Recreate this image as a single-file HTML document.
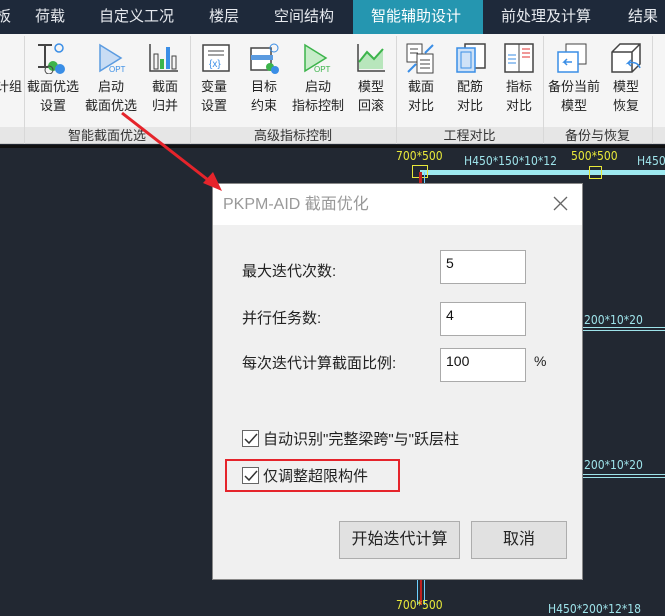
<!DOCTYPE html>
<html><head><meta charset="utf-8"><style>
*{margin:0;padding:0;box-sizing:border-box}
body{width:665px;height:613px;overflow:hidden;background:#222832;font-family:"Liberation Sans","Noto Sans CJK SC",sans-serif;position:relative}
.a{position:absolute}
.top{left:0;top:0;width:665px;height:34px;background:#1e293a}
.tab{top:0;height:34px;line-height:34px;color:#e6e9ee;font-size:15px;position:absolute}
.rib{left:0;top:34px;width:665px;height:93px;background:#f5f5f5}
.grp{left:0;top:127px;width:665px;height:17px;background:#e6e6e6;border-bottom:1px solid #ccc}
.gl{font-size:13px;color:#333;top:127px;height:17px;line-height:17px;position:absolute;text-align:center}
.sep{width:1px;background:#d8d8d8;top:36px;height:108px;position:absolute}
.lb{position:absolute;font-size:13px;color:#222;text-align:center;line-height:19px;top:77px}
.ic{position:absolute;top:42px;width:32px;height:32px}
.cy{color:#9ee3ea;font-size:12px;font-family:"DejaVu Sans Condensed","Liberation Sans",sans-serif}
.ye{color:#e8e83a;font-size:12px;font-family:"DejaVu Sans Condensed","Liberation Sans",sans-serif}
.dlg{left:212px;top:183px;width:371px;height:397px;background:#f0f0f0;border:1px solid #888}
.tt{left:0;top:0;width:369px;height:41px;background:#fff;color:#999;font-size:16px;line-height:41px;padding-left:10px}
.t{font-size:15px;color:#222;position:absolute}
.in{position:absolute;width:86px;height:34px;background:#fff;border:1px solid #aaa;font-size:14px;padding:4px 0 0 5px;color:#111}
.cb{position:absolute;width:17px;height:17px;border:1px solid #666;background:#fff}
.btn{position:absolute;height:38px;background:#e1e1e1;border:1px solid #adadad;font-size:16px;text-align:center;line-height:36px;color:#222}
</style></head><body>
<div class="a top"></div>
<div class="tab" style="left:-4px">板</div>
<div class="tab" style="left:35px">荷载</div>
<div class="tab" style="left:99px">自定义工况</div>
<div class="tab" style="left:209px">楼层</div>
<div class="tab" style="left:274px">空间结构</div>
<div class="a" style="left:353px;top:0;width:130px;height:34px;background:#2596b0"></div>
<div class="tab" style="left:371px;color:#fff">智能辅助设计</div>
<div class="tab" style="left:501px">前处理及计算</div>
<div class="tab" style="left:628px">结果</div>
<div class="a rib"></div><div class="a grp"></div>
<div class="sep" style="left:24px"></div><div class="sep" style="left:190px"></div><div class="sep" style="left:396px"></div><div class="sep" style="left:543px"></div><div class="sep" style="left:652px"></div>
<div class="gl" style="left:24px;width:166px">智能截面优选</div>
<div class="gl" style="left:190px;width:206px">高级指标控制</div>
<div class="gl" style="left:396px;width:147px">工程对比</div>
<div class="gl" style="left:543px;width:109px">备份与恢复</div>
<!-- icons -->
<svg class="ic" style="left:36px" viewBox="0 0 32 32"><path d="M2 3h14M9 3v22M2 25h14" stroke="#444" stroke-width="2" fill="none"/><circle cx="23" cy="6" r="4" fill="none" stroke="#3a8ee6" stroke-width="1.5"/><circle cx="17" cy="24" r="5" fill="#3cb44b"/><circle cx="24" cy="27" r="5" fill="#3a8ee6"/><circle cx="13" cy="28" r="4" fill="none" stroke="#444"/></svg>
<svg class="ic" style="left:97px" viewBox="0 0 32 32"><path d="M3 3L24 16L3 29Z" fill="#c8dcf4" stroke="#5b9be0" stroke-width="1.5"/><text x="12" y="30" font-size="8" fill="#3a8ee6" font-family="Liberation Sans">OPT</text></svg>
<svg class="ic" style="left:148px" viewBox="0 0 32 32"><path d="M2 2v27h28" stroke="#444" fill="none" stroke-width="1.5"/><rect x="6" y="12" width="4" height="15" fill="none" stroke="#444"/><rect x="12" y="17" width="4" height="10" fill="#3cb44b"/><rect x="18" y="5" width="4" height="22" fill="#3a8ee6"/><rect x="24" y="14" width="4" height="13" fill="none" stroke="#444"/></svg>
<svg class="ic" style="left:200px" viewBox="0 0 32 32"><rect x="3" y="3" width="26" height="26" fill="#fff" stroke="#444" stroke-width="1.5"/><path d="M8 9h16M8 13h16" stroke="#444"/><text x="9" y="25" font-size="10" fill="#3a8ee6">{x}</text></svg>
<svg class="ic" style="left:248px" viewBox="0 0 32 32"><rect x="3" y="6" width="20" height="22" fill="#fff" stroke="#444" stroke-width="1.5"/><rect x="3" y="13" width="22" height="5" fill="#5b9be0"/><circle cx="26" cy="6" r="4" fill="none" stroke="#3a8ee6"/><circle cx="22" cy="25" r="4" fill="#3cb44b"/><circle cx="27" cy="28" r="4" fill="#3a8ee6"/></svg>
<svg class="ic" style="left:302px" viewBox="0 0 32 32"><path d="M3 3L24 16L3 29Z" fill="#c6ecc8" stroke="#3cb44b" stroke-width="1.5"/><text x="12" y="30" font-size="8" fill="#3cb44b" font-family="Liberation Sans">OPT</text></svg>
<svg class="ic" style="left:355px" viewBox="0 0 32 32"><path d="M3 2v27h27" stroke="#444" fill="none" stroke-width="1.5"/><path d="M4 20L12 10L19 17L28 7V27H4Z" fill="#b8e6bc"/><path d="M4 20L12 10L19 17L28 7" stroke="#3cb44b" stroke-width="2" fill="none"/></svg>
<svg class="ic" style="left:405px" viewBox="0 0 32 32"><rect x="2" y="2" width="15" height="18" fill="#fff" stroke="#444"/><rect x="12" y="12" width="16" height="19" fill="#fff" stroke="#444"/><path d="M5 7h8M5 11h8M15 18h10M15 22h10M15 26h10" stroke="#444"/><path d="M28 3L20 11M3 30L11 22" stroke="#3a8ee6" stroke-width="2"/></svg>
<svg class="ic" style="left:455px" viewBox="0 0 32 32"><rect x="10" y="2" width="20" height="24" fill="#fff" stroke="#444" stroke-width="1.5"/><rect x="2" y="6" width="18" height="24" fill="#cfe2f7" stroke="#3a8ee6" stroke-width="1.5"/><rect x="6" y="10" width="10" height="16" fill="none" stroke="#3a8ee6"/></svg>
<svg class="ic" style="left:503px" viewBox="0 0 32 32"><rect x="2" y="2" width="28" height="28" fill="#fff" stroke="#444" stroke-width="1.5"/><path d="M16 2v28" stroke="#444"/><path d="M5 13h8M5 17h8M5 21h8" stroke="#3a8ee6"/><path d="M19 7h8M19 11h8M19 15h8" stroke="#e03030"/></svg>
<svg class="ic" style="left:556px" viewBox="0 0 32 32"><path d="M10 2h20v20H10z" fill="#fff" stroke="#444"/><rect x="2" y="10" width="20" height="20" fill="#fff" stroke="#3a8ee6" stroke-width="1.5"/><path d="M16 20H8l3-3M8 20l3 3" stroke="#3a8ee6" stroke-width="1.5" fill="none"/></svg>
<svg class="ic" style="left:610px" viewBox="0 0 32 32"><path d="M2 10L10 2h20v20l-8 8H2z M2 10h20v20 M22 10l8-8" fill="#fff" stroke="#444" stroke-width="1.5"/><path d="M30 26c-2-6-8-6-12-5l3-3M18 21l3 3" stroke="#3a8ee6" stroke-width="1.5" fill="none"/></svg>
<div class="lb" style="left:-4px;width:26px;text-align:right">计组</div>
<div class="lb" style="left:24px;width:58px">截面优选<br>设置</div>
<div class="lb" style="left:82px;width:58px">启动<br>截面优选</div>
<div class="lb" style="left:140px;width:50px">截面<br>归并</div>
<div class="lb" style="left:194px;width:40px">变量<br>设置</div>
<div class="lb" style="left:244px;width:40px">目标<br>约束</div>
<div class="lb" style="left:288px;width:60px">启动<br>指标控制</div>
<div class="lb" style="left:351px;width:40px">模型<br>回滚</div>
<div class="lb" style="left:401px;width:40px">截面<br>对比</div>
<div class="lb" style="left:450px;width:40px">配筋<br>对比</div>
<div class="lb" style="left:499px;width:40px">指标<br>对比</div>
<div class="lb" style="left:545px;width:58px">备份当前<br>模型</div>
<div class="lb" style="left:606px;width:40px">模型<br>恢复</div>
<div class="a" style="left:0;top:145px;width:665px;height:3px;background:#111"></div>
<!-- canvas -->
<div class="a ye" style="left:396px;top:149px">700*500</div>
<div class="a cy" style="left:464px;top:154px">H450*150*10*12</div>
<div class="a ye" style="left:571px;top:149px">500*500</div>
<div class="a cy" style="left:637px;top:154px">H450</div>
<div class="a" style="left:420px;top:170px;width:245px;height:5px;background:#9ee9f0"></div>
<div class="a" style="left:412px;top:165px;width:16px;height:13px;border:1.5px solid #e8e83a"></div>
<div class="a" style="left:589px;top:166px;width:13px;height:13px;border:1.5px solid #e8e83a"></div>
<div class="a" style="left:419px;top:172px;width:3px;height:12px;background:#c02020"></div>
<div class="a" style="left:424px;top:172px;width:1px;height:12px;background:#6cd0ff"></div>
<div class="a cy" style="left:584px;top:313px">200*10*20</div>
<div class="a" style="left:583px;top:327px;width:82px;height:1px;background:#9ee3ea"></div><div class="a" style="left:583px;top:330px;width:82px;height:1px;background:#9ee3ea"></div>
<div class="a cy" style="left:584px;top:458px">200*10*20</div>
<div class="a" style="left:583px;top:474px;width:82px;height:1px;background:#9ee3ea"></div><div class="a" style="left:583px;top:477px;width:82px;height:1px;background:#9ee3ea"></div>
<div class="a" style="left:417px;top:580px;width:1px;height:25px;background:#6cd0ff"></div><div class="a" style="left:420px;top:580px;width:2px;height:25px;background:#c02020"></div><div class="a" style="left:424px;top:580px;width:1px;height:25px;background:#6cd0ff"></div>
<div class="a ye" style="left:396px;top:598px">700*500</div>
<div class="a cy" style="left:548px;top:602px">H450*200*12*18</div>
<!-- dialog -->
<div class="a dlg">
<div class="a tt">PKPM-AID 截面优化</div>
<svg class="a" style="left:340px;top:12px" width="15" height="15"><path d="M1 1L14 14M14 1L1 14" stroke="#666" stroke-width="1.3"/></svg>
<div class="t" style="left:29px;top:76px">最大迭代次数:</div>
<div class="t" style="left:29px;top:123px">并行任务数:</div>
<div class="t" style="left:29px;top:168px">每次迭代计算截面比例:</div>
<div class="in" style="left:227px;top:66px">5</div>
<div class="in" style="left:227px;top:118px">4</div>
<div class="in" style="left:227px;top:164px">100</div>
<div class="t" style="left:321px;top:169px;font-size:14px">%</div>
<div class="cb" style="left:29px;top:246px"></div>
<svg class="a" style="left:31px;top:249px" width="14" height="12"><path d="M1 6L5 10L13 1" stroke="#333" stroke-width="1.5" fill="none"/></svg>
<div class="t" style="left:50px;top:244px">自动识别"完整梁跨"与"跃层柱</div>
<div class="a" style="left:12px;top:275px;width:175px;height:33px;border:2px solid #e5242b"></div>
<div class="cb" style="left:29px;top:283px"></div>
<svg class="a" style="left:31px;top:286px" width="14" height="12"><path d="M1 6L5 10L13 1" stroke="#333" stroke-width="1.5" fill="none"/></svg>
<div class="t" style="left:50px;top:281px">仅调整超限构件</div>
<div class="btn" style="left:126px;top:337px;width:121px">开始迭代计算</div>
<div class="btn" style="left:258px;top:337px;width:96px">取消</div>
</div>
<svg class="a" style="left:0;top:0" width="665" height="613"><path d="M122 113L212 183" stroke="#e5242b" stroke-width="3"/><path d="M222 191L203 183L213 172Z" fill="#e5242b"/></svg>
</body></html>
